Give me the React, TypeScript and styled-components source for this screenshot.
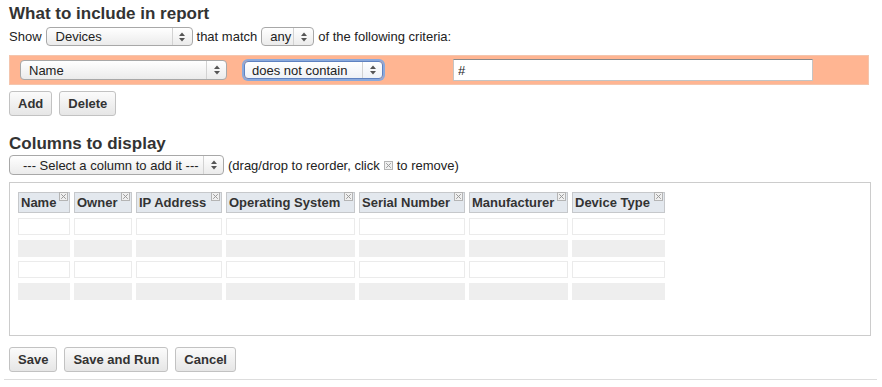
import React from "react";
import styled, { createGlobalStyle } from "styled-components";

const GlobalStyle = createGlobalStyle`
  html, body { margin: 0; padding: 0; background: #fff; }
  body {
    font-family: "Liberation Sans", Arial, Helvetica, sans-serif;
    font-size: 13px;
    color: #222;
  }
`;

const Page = styled.div`
  width: 882px;
  height: 387px;
  box-sizing: border-box;
  padding: 0 11px 0 9px;
  overflow: hidden;
`;

const Heading = styled.h2<{ $top: number }>`
  margin: ${(p) => p.$top}px 0 0;
  font-size: 17px;
  line-height: 20px;
  font-weight: bold;
  color: #333;
`;

const InlineRow = styled.div<{ $top: number; $h: number }>`
  display: flex;
  align-items: center;
  gap: 4px;
  height: ${(p) => p.$h}px;
  margin-top: ${(p) => p.$top}px;
  white-space: nowrap;
`;

const SelectBox = styled.div<{ $w: number; $h: number; $focus?: boolean; $ml?: number }>`
  display: inline-flex;
  align-items: stretch;
  flex: none;
  width: ${(p) => p.$w}px;
  height: ${(p) => p.$h}px;
  margin-left: ${(p) => p.$ml ?? 0}px;
  box-sizing: border-box;
  border: 1px solid ${(p) => (p.$focus ? "#5f82c0" : "#a8a8a8")};
  border-radius: 4px;
  background: ${(p) =>
    p.$focus
      ? "linear-gradient(#ffffff, #eef1f6)"
      : "linear-gradient(#ffffff, #ebebeb)"};
  box-shadow: ${(p) => (p.$focus ? "0 0 0 2px #8aa9dc" : "none")};
  color: #222;
`;

const SelectLabel = styled.span<{ $pad: number; $size?: number }>`
  flex: 1;
  display: flex;
  align-items: center;
  padding-left: ${(p) => p.$pad}px;
  font-size: ${(p) => p.$size ?? 13}px;
  overflow: hidden;
  white-space: nowrap;
`;

const SelectArrow = styled.span`
  width: 19px;
  flex: none;
  display: flex;
  align-items: center;
  justify-content: center;
  border-left: 1px solid #d2d2d2;
`;

const Arrows = () => (
  <svg width="6" height="10" viewBox="0 0 6 10">
    <polygon points="0,4 3,0.5 6,4" fill="#555" />
    <polygon points="0,6 3,9.5 6,6" fill="#555" />
  </svg>
);

type SelectProps = {
  label: string;
  w: number;
  h: number;
  pad?: number;
  size?: number;
  focus?: boolean;
  ml?: number;
};

const Select = ({ label, w, h, pad = 9, size, focus, ml }: SelectProps) => (
  <SelectBox $w={w} $h={h} $focus={focus} $ml={ml}>
    <SelectLabel $pad={pad} $size={size}>{label}</SelectLabel>
    <SelectArrow>
      <Arrows />
    </SelectArrow>
  </SelectBox>
);

const CriteriaBar = styled.div`
  display: flex;
  align-items: center;
  width: 860px;
  height: 30px;
  box-sizing: border-box;
  margin-top: 9px;
  padding-left: 10px;
  background: #ffb592;
  border: 1px solid #f4c5ad;
`;

const TextInput = styled.input`
  width: 360px;
  height: 22px;
  box-sizing: border-box;
  margin: 0 0 0 70px;
  padding: 0 4px;
  border: 1px solid #c4c4c4;
  border-top-color: #8a8a8a;
  background: #fff;
  font-family: inherit;
  font-size: 13px;
  color: #222;
  outline: none;
`;

const ButtonRow = styled.div<{ $top: number }>`
  display: flex;
  gap: 7px;
  margin-top: ${(p) => p.$top}px;
`;

const Button = styled.button`
  height: 25px;
  padding: 0 8px;
  box-sizing: border-box;
  border: 1px solid #c2c2c2;
  border-radius: 3px;
  background: linear-gradient(#fbfbfb, #e6e6e6);
  font-family: inherit;
  font-size: 13px;
  font-weight: bold;
  color: #333;
  cursor: pointer;
`;

const Hint = styled.span`
  display: inline-flex;
  align-items: center;
  gap: 4px;
  color: #222;
`;

const RemoveIcon = () => (
  <svg width="9" height="9" viewBox="0 0 9 9">
    <rect x="0.5" y="0.5" width="8" height="8" fill="#f0f0f0" stroke="#b4b4b4" />
    <path d="M2.2 2.2 L6.8 6.8 M6.8 2.2 L2.2 6.8" stroke="#9a9a9a" strokeWidth="1" />
  </svg>
);

const ColumnsBox = styled.div`
  margin-top: 7px;
  height: 154px;
  box-sizing: border-box;
  border: 1px solid #cccccc;
  padding: 9px 0 0 8px;
`;

const GridRow = styled.div<{ $top: number }>`
  display: flex;
  gap: 4px;
  margin-top: ${(p) => p.$top}px;
`;

const HeaderCell = styled.div<{ $w: number }>`
  position: relative;
  width: ${(p) => p.$w}px;
  height: 21px;
  box-sizing: border-box;
  border: 1px solid #c6c8cb;
  background: #e3e8ee;
  padding-left: 2px;
  font-size: 13px;
  font-weight: bold;
  line-height: 19px;
  color: #333;
  white-space: nowrap;
`;

const CellRemove = styled.span`
  position: absolute;
  top: -1px;
  right: 1px;
  display: flex;
`;

const DataCell = styled.div<{ $w: number; $alt: boolean }>`
  width: ${(p) => p.$w}px;
  height: 17px;
  box-sizing: border-box;
  background: ${(p) => (p.$alt ? "#eeeeee" : "#ffffff")};
  border: 1px solid ${(p) => (p.$alt ? "#eeeeee" : "#ebebeb")};
`;

const Divider = styled.div`
  height: 1px;
  background: #dddddd;
  margin: 7px -6px 0 -5px;
`;

const columns: { name: string; w: number }[] = [
  { name: "Name", w: 52 },
  { name: "Owner", w: 58 },
  { name: "IP Address", w: 86 },
  { name: "Operating System", w: 129 },
  { name: "Serial Number", w: 106 },
  { name: "Manufacturer", w: 99 },
  { name: "Device Type", w: 93 },
];

const rows = [false, true, false, true];

export default function App() {
  return (
    <>
      <GlobalStyle />
      <Page>
        <Heading $top={4}>What to include in report</Heading>
        <InlineRow $top={3} $h={19}>
          <span>Show</span>
          <Select label="Devices" w={147} h={19} pad={9} />
          <span>that match</span>
          <Select label="any" w={53} h={19} pad={8} />
          <span>of the following criteria:</span>
        </InlineRow>

        <CriteriaBar>
          <Select label="Name" w={207} h={20} pad={8} />
          <Select label="does not contain" w={139} h={18} pad={7} focus ml={17} />
          <TextInput defaultValue="#" readOnly />
        </CriteriaBar>

        <ButtonRow $top={6}>
          <Button>Add</Button>
          <Button>Delete</Button>
        </ButtonRow>

        <Heading $top={18}>Columns to display</Heading>
        <InlineRow $top={1} $h={20}>
          <Select label="--- Select a column to add it ---" w={215} h={20} pad={13} size={13} />
          <Hint>
            (drag/drop to reorder, click <RemoveIcon /> to remove)
          </Hint>
        </InlineRow>

        <ColumnsBox>
          <GridRow $top={0}>
            {columns.map((c) => (
              <HeaderCell key={c.name} $w={c.w}>
                {c.name}
                <CellRemove>
                  <RemoveIcon />
                </CellRemove>
              </HeaderCell>
            ))}
          </GridRow>
          {rows.map((alt, i) => (
            <GridRow key={i} $top={i === 0 ? 5 : 4.5}>
              {columns.map((c) => (
                <DataCell key={c.name} $w={c.w} $alt={alt} />
              ))}
            </GridRow>
          ))}
        </ColumnsBox>

        <ButtonRow $top={11}>
          <Button>Save</Button>
          <Button>Save and Run</Button>
          <Button>Cancel</Button>
        </ButtonRow>
        <Divider />
      </Page>
    </>
  );
}
